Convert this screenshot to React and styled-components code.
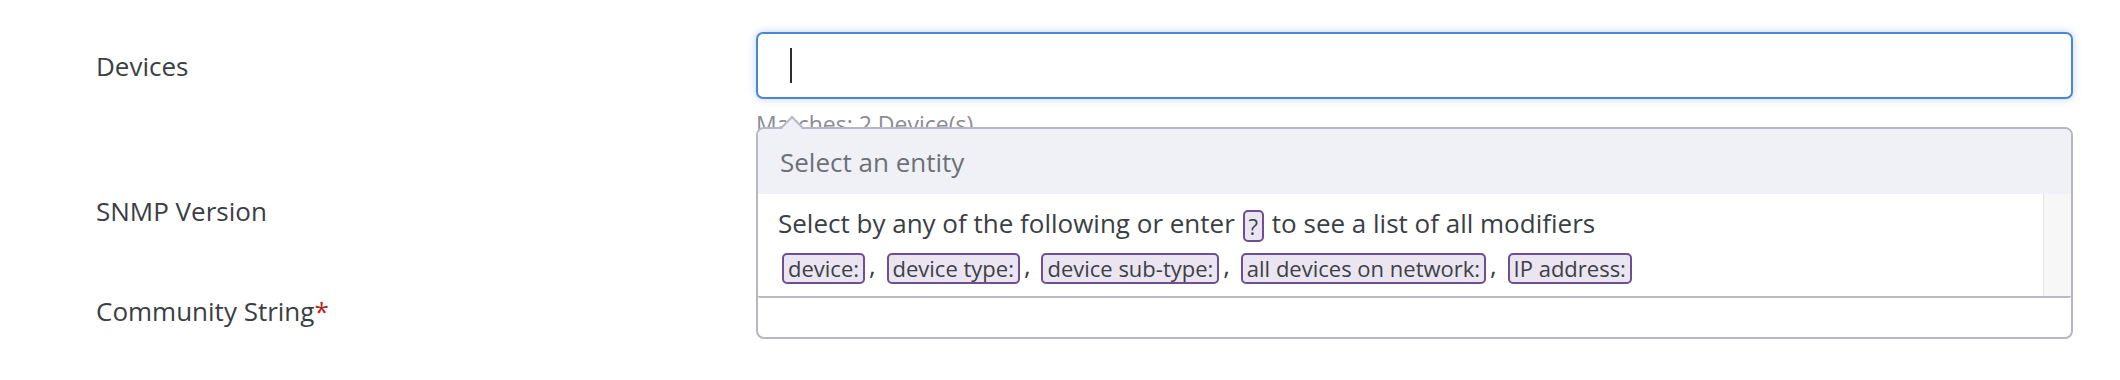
import styled, { createGlobalStyle } from "styled-components";

const GlobalStyle = createGlobalStyle`
  html, body {
    margin: 0;
    padding: 0;
    background: #ffffff;
  }
  body {
    font-family: "Open Sans", "Noto Sans", sans-serif;
    color: #3b3e44;
  }
`;

const Page = styled.div`
  width: 2120px;
  height: 380px;
  box-sizing: border-box;
  padding: 32px 47px 0 96px;
  overflow: hidden;
`;

const Row = styled.div`
  display: grid;
  grid-template-columns: 660px 1fr;
  align-items: start;
  height: ${({ $height }) => $height}px;
`;

const Label = styled.div`
  height: 67px;
  display: flex;
  align-items: center;
  font-size: 26px;
  color: #3b3e44;
`;

const Required = styled.span`
  color: #b3261e;
`;

const Field = styled.div`
  position: relative;
`;

const InputBox = styled.div`
  height: 67px;
  box-sizing: border-box;
  display: flex;
  align-items: center;
  padding-left: 32px;
  border: 2px solid #4b87d9;
  border-radius: 7px;
  background: #ffffff;
  box-shadow: 0 0 9px rgba(75, 135, 217, 0.35);
`;

const TextCaret = styled.span`
  width: 2px;
  height: 35px;
  background: #2b2d31;
`;

const Hint = styled.div`
  margin-top: 10px;
  font-size: 23px;
  line-height: 31px;
  color: #8a8d93;
`;

const Dropdown = styled.div`
  position: absolute;
  top: 95px;
  left: 0;
  right: 0;
  z-index: 10;
  display: flex;
  flex-direction: column;
  border: 2px solid #b6b7c3;
  border-radius: 8px;
  background: #ffffff;
`;

const Pointer = styled.span`
  position: absolute;
  top: -10px;
  left: 26px;
  width: 14px;
  height: 14px;
  background: #f0f1f6;
  border-top: 2px solid #b6b7c3;
  border-left: 2px solid #b6b7c3;
  transform: rotate(45deg);
`;

const Header = styled.div`
  height: 65px;
  display: flex;
  align-items: center;
  padding-left: 22px;
  background: #f0f1f6;
  border-radius: 6px 6px 0 0;
  font-size: 26px;
  color: #6d7078;
`;

const Body = styled.div`
  height: 104px;
  box-sizing: border-box;
  display: flex;
  border-bottom: 2px solid #b9bac6;
  border-radius: 0 0 2px 2px;
`;

const Content = styled.div`
  flex: 1;
  padding: 11px 0 0 20px;
  overflow: hidden;
`;

const Line = styled.div`
  font-size: 26px;
  line-height: 36px;
  color: #3b3e44;
  white-space: nowrap;
  margin-top: ${({ $top }) => $top || 0}px;
`;

const Tag = styled.span`
  display: inline-block;
  vertical-align: middle;
  margin: ${({ $inline }) => ($inline ? "0 1px" : "0 4px")};
  padding: 0 4px;
  font-size: 22px;
  line-height: ${({ $inline }) => ($inline ? "28px" : "27px")};
  color: #3d3f45;
  background: #ebe5f2;
  border: 2px solid #6e4f91;
  border-radius: 5px;
`;

const Scrollbar = styled.div`
  width: 27px;
  background: #f7f7f7;
  border-left: 1px solid #e4e4e7;
`;

const Footer = styled.div`
  height: 39px;
`;

const modifiers = [
  "device:",
  "device type:",
  "device sub-type:",
  "all devices on network:",
  "IP address:",
];

export default function App() {
  return (
    <>
      <GlobalStyle />
      <Page>
        <Row $height={145}>
          <Label>Devices</Label>
          <Field>
            <InputBox>
              <TextCaret />
            </InputBox>
            <Hint>Matches: 2 Device(s)</Hint>
            <Dropdown>
              <Pointer />
              <Header>Select an entity</Header>
              <Body>
                <Content>
                  <Line>
                    Select by any of the following or enter <Tag $inline>?</Tag>{" "}
                    to see a list of all modifiers
                  </Line>
                  <Line $top={5}>
                    {modifiers.map((m, i) => (
                      <span key={m}>
                        <Tag>{m}</Tag>
                        {i < modifiers.length - 1 ? ", " : ""}
                      </span>
                    ))}
                  </Line>
                </Content>
                <Scrollbar />
              </Body>
              <Footer />
            </Dropdown>
          </Field>
        </Row>
        <Row $height={100}>
          <Label>SNMP Version</Label>
        </Row>
        <Row $height={67}>
          <Label>
            Community String<Required>*</Required>
          </Label>
        </Row>
      </Page>
    </>
  );
}
